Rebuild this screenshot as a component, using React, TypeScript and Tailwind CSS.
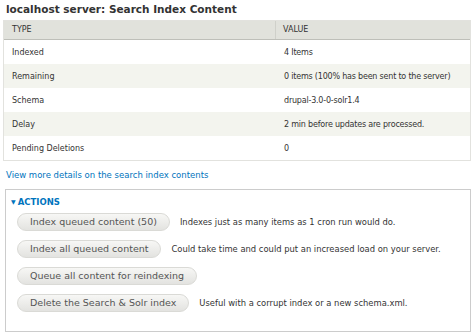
import React from "react";

const rows: [string, string][] = [
  ["Indexed", "4 Items"],
  ["Remaining", "0 items (100% has been sent to the server)"],
  ["Schema", "drupal-3.0-0-solr1.4"],
  ["Delay", "2 min before updates are processed."],
  ["Pending Deletions", "0"],
];

const actions: [string, string][] = [
  ["Index queued content (50)", "Indexes just as many items as 1 cron run would do."],
  ["Index all queued content", "Could take time and could put an increased load on your server."],
  ["Queue all content for reindexing", ""],
  ["Delete the Search & Solr index", "Useful with a corrupt index or a new schema.xml."],
];

export default function App() {
  return (
    <div className="w-[474px] h-[333px] overflow-hidden bg-white text-[#333] font-['DejaVu_Sans',Verdana,sans-serif]">
      <h2 className="pl-[6px] pt-[1px] h-[20px] text-[10.5px] font-bold leading-[16px] text-[#333]">
        localhost server: Search Index Content
      </h2>
      <div className="ml-[3px] w-[468px] border border-[#e2e2de]">
        <div className="flex h-[19px] items-center bg-[#e1e2dc] border-b border-[#bebfb9] text-[8px] leading-none">
          <div className="w-[272px] h-full flex items-center pl-[8px] border-r border-[#cfd0ca]">TYPE</div>
          <div className="flex-1 pl-[7px]">VALUE</div>
        </div>
        {rows.map(([k, v], i) => (
          <div
            key={k}
            className={`flex h-[24px] items-center pt-[1px] leading-none ${i % 2 === 1 ? "bg-[#f3f4ee]" : "bg-white"}`}
          >
            <div className="w-[273px] pl-[8px] text-[8px]">{k}</div>
            <div className="flex-1 pl-[7px] text-[8px] tracking-[-0.2px]">{v}</div>
          </div>
        ))}
      </div>
      <div className="pl-[6px] mt-[8px] h-[12px] text-[8.5px] leading-[12px] text-[#0074bd]">
        View more details on the search index contents
      </div>
      <div className="ml-[5px] mt-[8px] w-[466px] h-[143px] border border-[#cccccc] pl-[11px] pt-[6px]">
        <div className="flex items-center -ml-[6px] h-[12px] text-[8.5px] font-bold leading-none text-[#0074bd]">
          <span className="text-[6px] mr-[2px]">▼</span>ACTIONS
        </div>
        <div className="flex flex-col gap-[9px] mt-[5px]">
          {actions.map(([b, d]) => (
            <div key={b} className="flex items-center h-[18px]">
              <div className="h-[18px] flex items-center px-[12px] rounded-full border border-[#dadad6] bg-gradient-to-b from-[#f7f7f5] to-[#e3e3e0] text-[9.5px] leading-none text-[#555]">
                {b}
              </div>
              {d && <div className="ml-[10px] text-[8.4px] leading-none text-[#333]">{d}</div>}
            </div>
          ))}
        </div>
      </div>
    </div>
  );
}
